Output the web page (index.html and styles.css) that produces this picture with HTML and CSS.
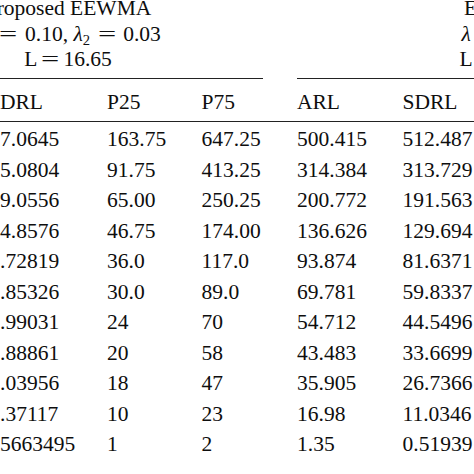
FILE: index.html
```html
<!DOCTYPE html>
<html>
<head>
<meta charset="utf-8">
<link rel="stylesheet" href="styles.css">
</head>
<body>
<div class="page">
  <div class="groups">
    <div class="group g-left">
      <div>Proposed EEWMA</div>
      <div class="wide"><i>λ</i><sub>1</sub><span class="eq">=</span>0.10, <i>λ</i><sub>2</sub><span class="eq">=</span>0.03</div>
      <div>L<span class="eq">=</span>16.65</div>
    </div>
    <div class="group g-right">
      <div>EWMA</div>
      <div><i>λ</i><span class="eq">=</span>0.10</div>
      <div>L<span class="eq">=</span>2.70</div>
    </div>
  </div>
  <div class="row head">
    <span>DRL</span><span>P25</span><span>P75</span><span>ARL</span><span>SDRL</span>
  </div>
  <div class="rows">
    <div class="row"><span>7.0645</span><span>163.75</span><span>647.25</span><span>500.415</span><span>512.487</span></div>
    <div class="row"><span>5.0804</span><span>91.75</span><span>413.25</span><span>314.384</span><span>313.729</span></div>
    <div class="row"><span>9.0556</span><span>65.00</span><span>250.25</span><span>200.772</span><span>191.563</span></div>
    <div class="row"><span>4.8576</span><span>46.75</span><span>174.00</span><span>136.626</span><span>129.694</span></div>
    <div class="row"><span>.72819</span><span>36.0</span><span>117.0</span><span>93.874</span><span>81.6371</span></div>
    <div class="row"><span>.85326</span><span>30.0</span><span>89.0</span><span>69.781</span><span>59.8337</span></div>
    <div class="row"><span>.99031</span><span>24</span><span>70</span><span>54.712</span><span>44.5496</span></div>
    <div class="row"><span>.88861</span><span>20</span><span>58</span><span>43.483</span><span>33.6699</span></div>
    <div class="row"><span>.03956</span><span>18</span><span>47</span><span>35.905</span><span>26.7366</span></div>
    <div class="row"><span>.37117</span><span>10</span><span>23</span><span>16.98</span><span>11.0346</span></div>
    <div class="row"><span>5663495</span><span>1</span><span>2</span><span>1.35</span><span>0.51939</span></div>
  </div>
</div>
</body>
</html>
```

FILE: styles.css
```css
html, body {
  margin: 0;
  padding: 0;
  background: #fff;
}
body {
  width: 474px;
  height: 474px;
  overflow: hidden;
}
.page {
  width: 474px;
  overflow: hidden;
  font-family: "Liberation Serif", "Times New Roman", serif;
  font-size: 21.5px;
  color: #0e0e0e;
  white-space: nowrap;
}
.groups {
  display: flex;
  gap: 34px;
  margin-top: -4px;
}
.group {
  flex: none;
  line-height: 25.5px;
  text-align: center;
  padding-bottom: 5px;
  border-bottom: 1px solid #222;
}
.g-left {
  width: 390px;
  margin-left: -127px;
}
.g-right {
  width: 402px;
}
.group i {
  font-style: italic;
}
.group sub {
  font-size: 0.68em;
  line-height: 0;
  vertical-align: -0.25em;
}
.eq {
  display: inline-block;
  margin: 0 7px;
  transform: scaleX(1.5);
}
.wide .eq {
  margin: 0 10.5px;
}
.row {
  display: grid;
  grid-template-columns: 107px 94.5px 95.5px 105.5px 1fr;
  line-height: 30.5px;
}
.head {
  padding-top: 8px;
  padding-bottom: 3.5px;
  border-bottom: 1px solid #222;
}
.rows {
  padding-top: 2.7px;
}
```
